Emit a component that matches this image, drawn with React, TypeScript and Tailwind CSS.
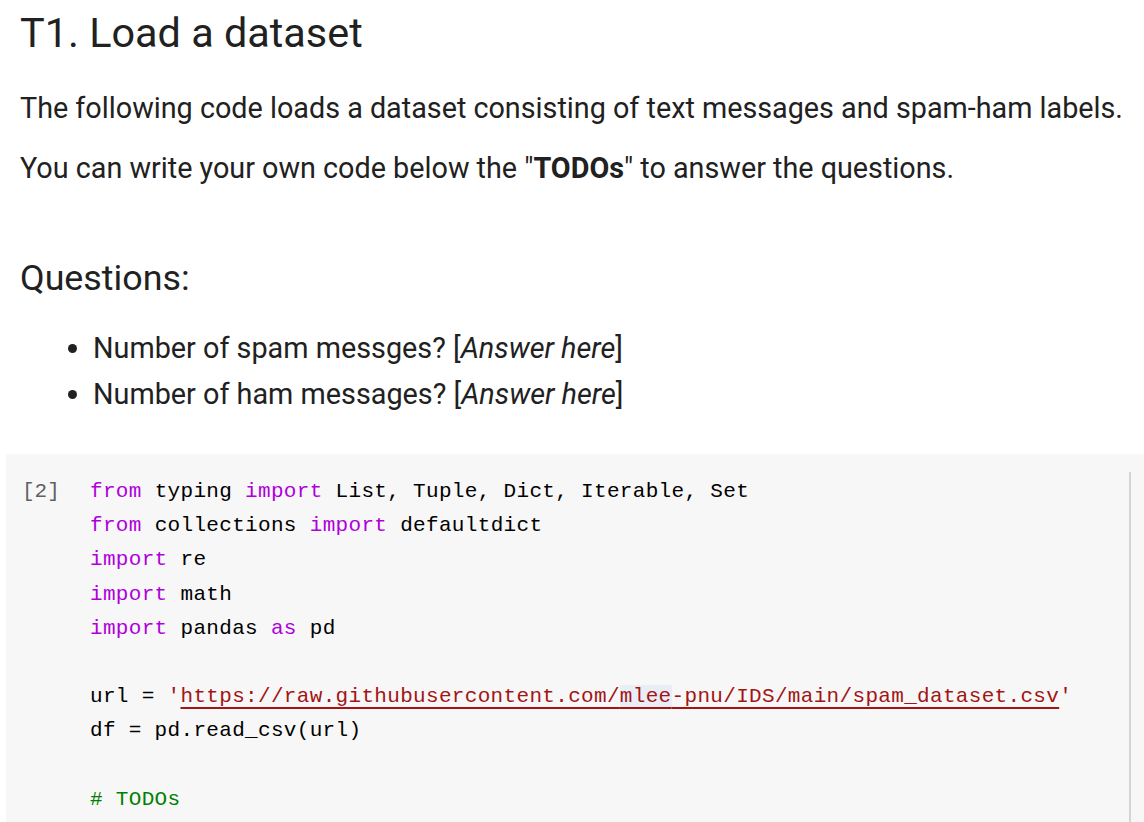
const kw = "text-[#af00db]";
const str = "text-[#a31515]";

function Code() {
  return (
    <div className="font-['Liberation_Mono',monospace] text-[21px] leading-[34.2px] tracking-[0.32px] text-black whitespace-pre">
      <div>
        <span className={kw}>from</span> typing <span className={kw}>import</span> List, Tuple, Dict, Iterable, Set
      </div>
      <div>
        <span className={kw}>from</span> collections <span className={kw}>import</span> defaultdict
      </div>
      <div>
        <span className={kw}>import</span> re
      </div>
      <div>
        <span className={kw}>import</span> math
      </div>
      <div>
        <span className={kw}>import</span> pandas <span className={kw}>as</span> pd
      </div>
      <div>&nbsp;</div>
      <div>
        url = <span className={str}>'</span>
        <span className={`${str} underline decoration-2 underline-offset-[5px] decoration-[#a31515]`}>
          https://raw.githubusercontent.com/<span className="bg-[#e8edf6]">mlee</span>-pnu/IDS/main/spam_dataset.csv
        </span>
        <span className={str}>'</span>
      </div>
      <div>df = pd.read_csv(url)</div>
      <div>&nbsp;</div>
      <div className="text-[#008000]"># TODOs</div>
    </div>
  );
}

export default function App() {
  return (
    <div className="min-h-screen bg-white font-['Roboto',sans-serif] text-[#212121] overflow-hidden">
      <h1 className="pl-5 pt-[9px] text-[41.4px] leading-[48px] font-normal">T1. Load a dataset</h1>

      <p className="pl-5 mt-[31px] text-[28.75px] leading-[40px]">
        The following code loads a dataset consisting of text messages and spam-ham labels.
      </p>
      <p className="pl-5 mt-5 text-[28.75px] leading-[40px]">
        You can write your own code below the "<b className="font-bold">TODOs</b>" to answer the questions.
      </p>

      <h2 className="pl-5 mt-[68px] text-[35.8px] leading-[44px] font-normal">Questions:</h2>

      <ul className="mt-7 pl-[93px] list-disc text-[28.8px] leading-[40px] flex flex-col gap-[6px]">
        <li>
          Number of spam messges? [<i>Answer here</i>]
        </li>
        <li>
          Number of ham messages? [<i>Answer here</i>]
        </li>
      </ul>

      <div className="mt-[40px] ml-[6px] bg-[#f7f7f7] flex pb-10">
        <div className="w-[84px] shrink-0 pt-[21px] pl-4 font-['Liberation_Mono',monospace] text-[21px] leading-[34.2px] text-[#616161]">
          [2]
        </div>
        <div className="flex-1 mt-[18px] pt-[3px] mr-[13px] border-r-2 border-[#d4d4d4] pb-10">
          <Code />
        </div>
      </div>
    </div>
  );
}
